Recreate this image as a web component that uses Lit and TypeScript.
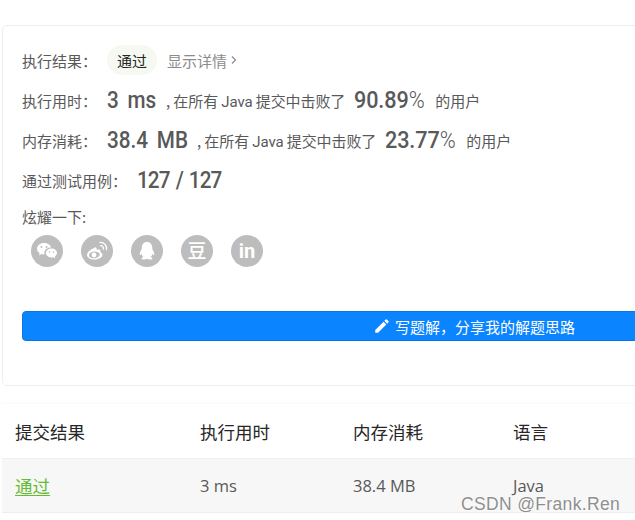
import { LitElement, html, css } from "lit";
import { customElement } from "lit/decorators.js";

@customElement("app-root")
export class AppRoot extends LitElement {
  static styles = css`
    :host {
      display: block;
      position: relative;
      width: 635px;
      height: 520px;
      overflow: hidden;
      background: #fff;
      font-family: "Noto Sans CJK SC", sans-serif;
      color: #595959;
    }
    .page { width: 940px; padding: 25px 0 0 2px; display: flex; flex-direction: column; gap: 18px; }
    .card {
      height: 361px; box-sizing: border-box;
      border: 1px solid #eee; border-radius: 5px;
      padding: 19px 19px 0 19px;
      display: flex; flex-direction: column;
    }
    .row { display: flex; align-items: center; font-size: 15px; white-space: nowrap; }
    .r1 { height: 30px; }
    .r2 { height: 30px; margin-top: 10px; }
    .r3 { height: 30px; margin-top: 10px; }
    .r4 { height: 30px; margin-top: 10px; }
    .label { color: #595959; }
    .l1 { width: 85px; }
    .l3 { width: 115px; }
    .pill {
      width: 50px; height: 30px; border-radius: 15px; background: #f6f9f1;
      color: #262626; display: flex; align-items: center; justify-content: center;
      margin-right: 10px;
    }
    .detail { color: #8c8c8c; display: flex; align-items: center; gap: 3px; }
    .num {
      display: inline-block;
      font-family: "Roboto", sans-serif; font-size: 23px; font-weight: 500;
      color: #595959; word-spacing: 4px;
      transform: scaleX(0.9); transform-origin: left center;
    }
    .w-ms { width: 49px; }
    .w-mb { width: 80px; }
    .w-pct { width: 69px; }
    .w-frac { width: 84px; }
    .frac { letter-spacing: -1px; word-spacing: 2px; }
    .pct { font-size: 24px; letter-spacing: -0.1px; word-spacing: 0; }
    .pct span { font-weight: 300; }
    .java { font-family: "Roboto", sans-serif; }
    .t1 { margin-left: 10px; letter-spacing: -0.1px; }
    .t2 { margin-left: 9px; }
    .t3 { margin-left: 12px; }
    .share { margin-top: 12px; font-size: 15px; line-height: 20px; color: #595959; }
    .icons { display: flex; gap: 18px; padding: 8px 0 0 9px; }
    .ic {
      width: 32px; height: 32px; border-radius: 50%; background: #bdbdbd;
      display: flex; align-items: center; justify-content: center; color: #fff;
    }
    .ic svg { display: block; }
    .dou { font-size: 19px; font-weight: 500; line-height: 30px; height: 32px; }
    .in { font-family: "Roboto", sans-serif; font-weight: 700; font-size: 20px; line-height: 32px; }
    .btn {
      margin-top: 44px; height: 30px; box-sizing: border-box;
      width: 904px; background: #0a84ff; border: 1px solid #0a76e4; border-radius: 4px;
      color: #fff; font-size: 15px;
      display: flex; align-items: center; justify-content: center; gap: 4px;
    }
    .table { box-shadow: 0 -1px 2px rgba(0,0,0,0.03); }
    .tr {
      display: grid; grid-template-columns: 185px 153px 160px 1fr;
      padding-left: 13px; align-items: center;
    }
    .head { height: 55px; font-size: 17.5px; color: #262626; border-bottom: 1px solid #eee; box-sizing: border-box; }
    .body {
      height: 54px; background: #f7f7f7; border-bottom: 1px solid #eee; box-sizing: border-box;
      padding-bottom: 1px; font-size: 16.5px;
      color: #595959; font-family: "Open Sans", "Noto Sans CJK SC", sans-serif;
    }
    .ok {
      color: #63bb30; font-size: 17.5px; font-family: "Noto Sans CJK SC", sans-serif;
      text-decoration: underline; text-underline-offset: 2px; text-decoration-thickness: 1px;
    }
    .mark {
      position: absolute; left: 461px; top: 493px;
      font-family: "Liberation Sans", sans-serif; font-size: 17.5px; line-height: 22px;
      color: #8f8f8f; text-shadow: 0 0 2px #fff, 0 0 2px #fff; letter-spacing: 0.35px;
      white-space: nowrap;
    }
  `;

  render() {
    return html`
      <div class="page">
        <section class="card">
          <div class="row r1">
            <span class="label l1">执行结果：</span>
            <span class="pill">通过</span>
            <span class="detail">显示详情
              <svg width="8" height="10" viewBox="0 0 8 10"><path d="M2 1.500 5.500 5 2 8.500" fill="none" stroke="#8c8c8c" stroke-width="1.200"/></svg>
            </span>
          </div>
          <div class="row r2">
            <span class="label l1">执行用时：</span>
            <span class="num w-ms">3 ms</span>
            <span class="t1">, 在所有 <span class="java">Java</span> 提交中击败了</span>
            <span class="num pct w-pct t2">90.89<span>%</span></span>
            <span class="t3">的用户</span>
          </div>
          <div class="row r3">
            <span class="label l1">内存消耗：</span>
            <span class="num w-mb">38.4 MB</span>
            <span class="t1">, 在所有 <span class="java">Java</span> 提交中击败了</span>
            <span class="num pct w-pct t2">23.77<span>%</span></span>
            <span class="t3">的用户</span>
          </div>
          <div class="row r4">
            <span class="label l3">通过测试用例：</span>
            <span class="num frac w-frac">127 / 127</span>
          </div>
          <div class="share">炫耀一下:</div>
          <div class="icons">
            <span class="ic">
              <svg width="22" height="20" viewBox="0 0 22 20" fill="#fff">
                <path d="M8 2C4 2 1 4.600 1 7.800c0 1.900 1 3.400 2.700 4.500L3 14.400l2.500-1.300c.8.200 1.600.3 2.500.3h.6a5 5 0 0 1-.2-1.500c0-3 2.700-5.400 6.200-5.400h.6C14.500 4 11.500 2 8 2z"/>
                <path d="M21 12c0-2.500-2.500-4.500-5.500-4.500S10 9.500 10 12s2.500 4.500 5.500 4.500c.7 0 1.300-.1 1.900-.3l2 1.100-.5-1.800C20.100 14.600 21 13.400 21 12z"/>
                <circle cx="5.500" cy="6" r="1" fill="#bdbdbd"/><circle cx="10.500" cy="6" r="1" fill="#bdbdbd"/>
                <circle cx="13.500" cy="11" r=".8" fill="#bdbdbd"/><circle cx="17.500" cy="11" r=".8" fill="#bdbdbd"/>
              </svg>
            </span>
            <span class="ic">
              <svg width="22" height="20" viewBox="0 0 22 20" fill="#fff">
                <path fill-rule="evenodd" d="M9 6.500C5 8 1 11.300 1 14c0 2.600 3.300 4.500 7.500 4.500 4.800 0 8-2.700 8-4.800 0-1.500-1.400-2.200-2.300-2.500.6-1.500.3-2.700-1.600-2.800-1 0-2 .4-2 .4.300-1.400-.2-3-1.600-2.300zM8 10.500c3-.3 5.600.9 5.800 2.800.2 1.800-2 3.600-5 3.900s-5.600-.9-5.800-2.800c-.2-1.800 2-3.600 5-3.900z"/>
                <circle cx="8" cy="14" r="2.400"/>
                <path d="M14 1.500a6 6 0 0 1 6.500 7.200M14.500 4.700a3 3 0 0 1 3 3.500" fill="none" stroke="#fff" stroke-width="1.300" stroke-linecap="round"/>
              </svg>
            </span>
            <span class="ic">
              <svg width="20" height="22" viewBox="0 0 20 22" fill="#fff">
                <path d="M10 2C6.500 2 4.800 4.600 4.800 7.500c0 .8 0 1.300-.3 1.900C3.200 11.600 2.400 13.600 2.900 15c.4.500 1.300-.5 1.700-1.300.2 1.500 1 2.700 1.800 3.400-1.200.5-2 1-1.700 1.800.3.700 2.600.7 3.900.3.500-.2 1.100-.2 2.800 0 1.300.4 3.600.4 3.900-.3.300-.8-.5-1.300-1.700-1.800.8-.7 1.600-1.900 1.800-3.400.4.800 1.300 1.800 1.700 1.300.5-1.400-.3-3.400-1.600-5.600-.3-.6-.3-1.100-.3-1.900C15.200 4.600 13.500 2 10 2z"/>
              </svg>
            </span>
            <span class="ic"><span class="dou">豆</span></span>
            <span class="ic"><span class="in">in</span></span>
          </div>
          <div class="btn">
            <svg width="18" height="18" viewBox="0 0 24 24" fill="#fff"><path d="M3 17.250V21h3.750L17.810 9.940l-3.750-3.750L3 17.250zM20.710 7.040a1 1 0 0 0 0-1.410l-2.340-2.340a1 1 0 0 0-1.410 0l-1.830 1.830 3.750 3.750 1.830-1.830z"/></svg>
            <span>写题解，分享我的解题思路</span>
          </div>
        </section>
        <section class="table">
          <div class="tr head"><span>提交结果</span><span>执行用时</span><span>内存消耗</span><span>语言</span></div>
          <div class="tr body"><span class="ok">通过</span><span>3 ms</span><span>38.4 MB</span><span>Java</span></div>
        </section>
      </div>
      <div class="mark">CSDN @Frank.Ren</div>
    `;
  }
}
